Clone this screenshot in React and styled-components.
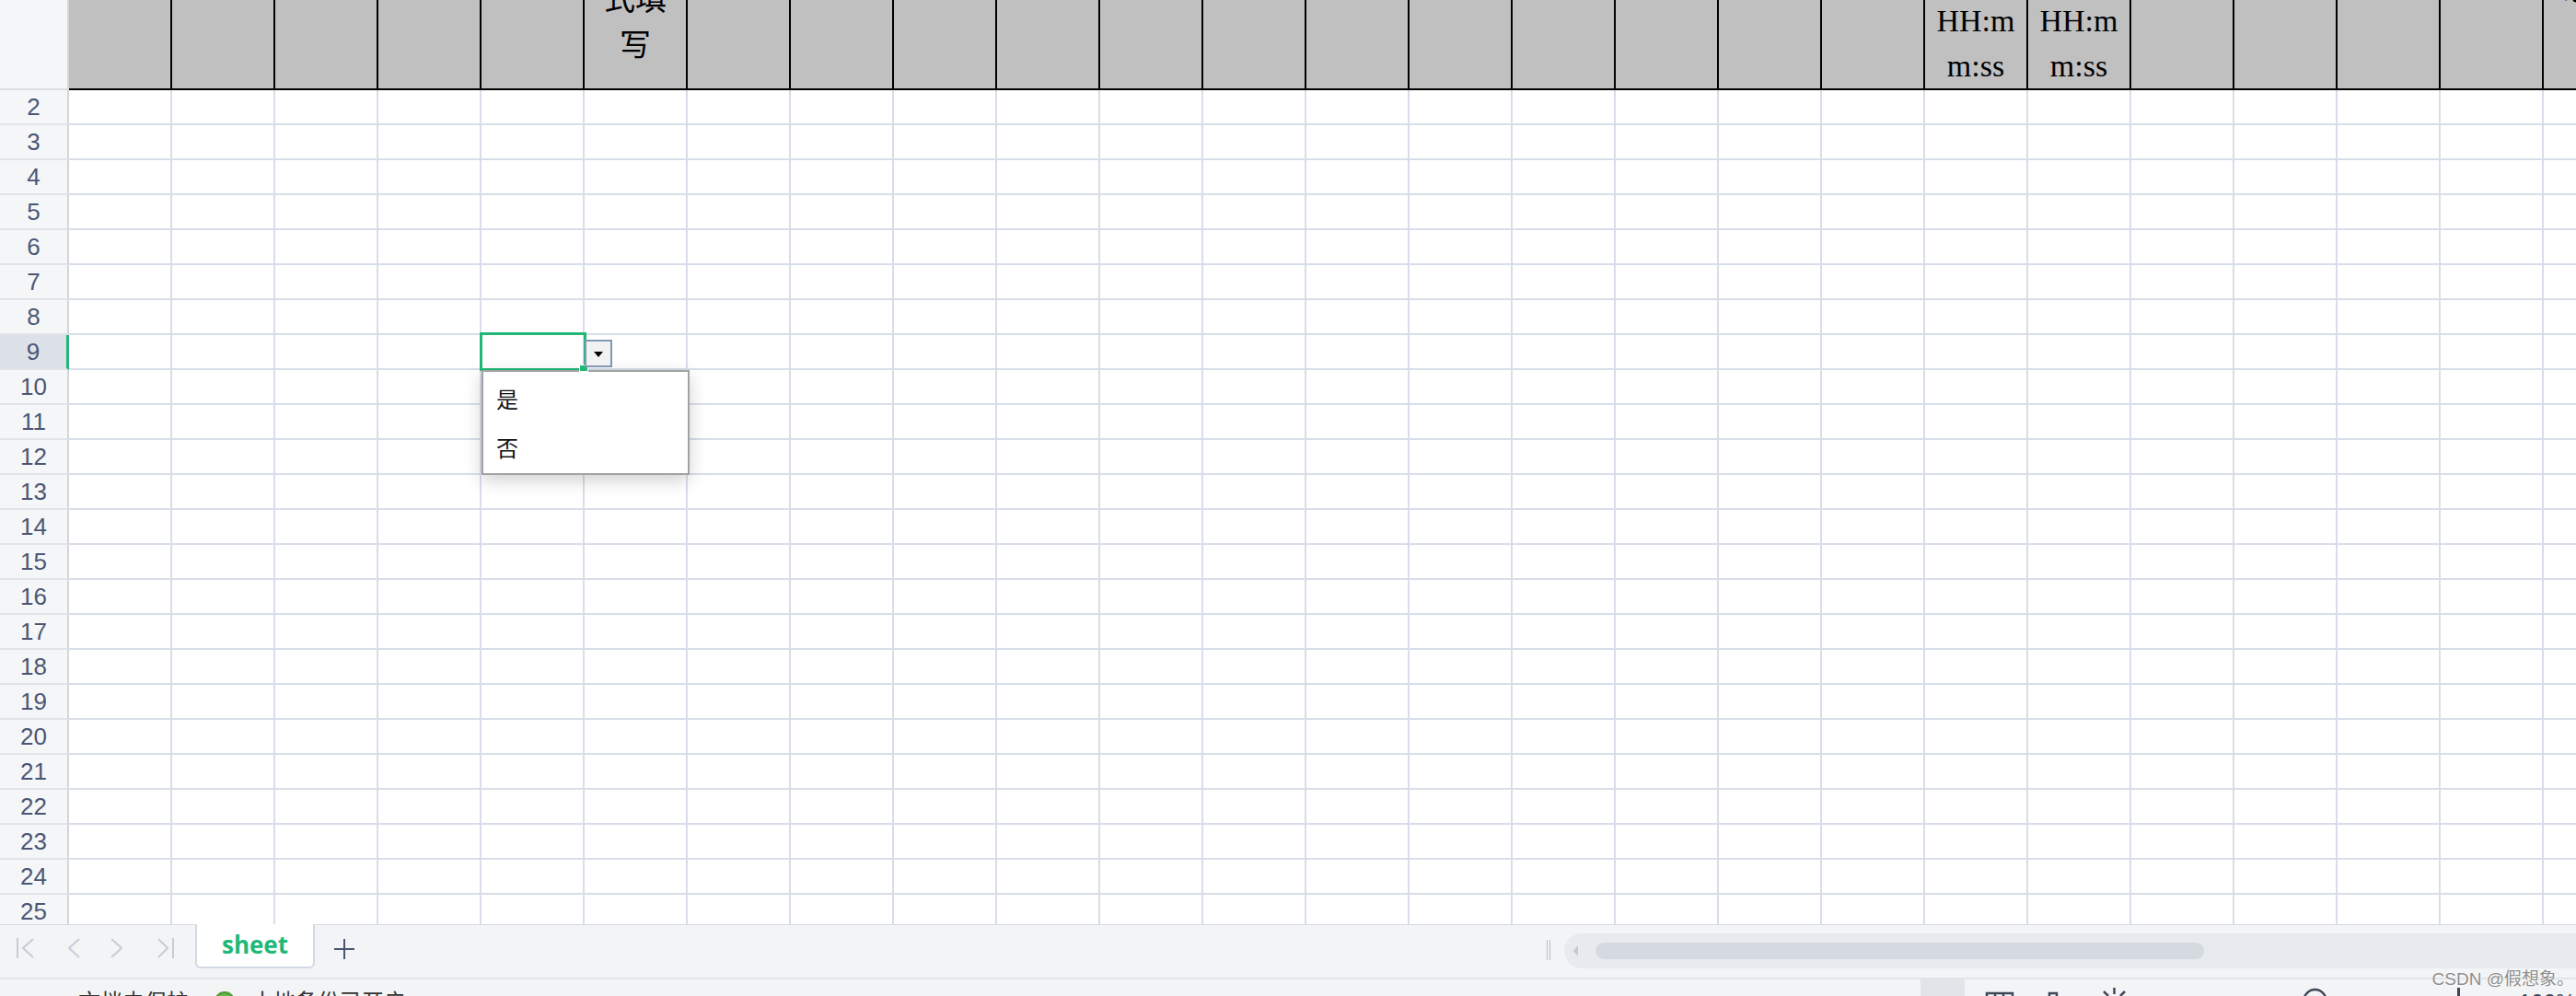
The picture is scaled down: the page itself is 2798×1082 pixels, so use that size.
import React from 'react';
import styled, { createGlobalStyle } from 'styled-components';

const GREEN = '#20b877';
const GRID = '#d8dee9';
const COLS = 25;

const Global = createGlobalStyle`
  *, *::before, *::after { box-sizing: border-box; }
  html, body { margin: 0; padding: 0; background: #fff; }
  body { font-family: "Liberation Sans", "Noto Sans CJK SC", sans-serif; }
  #root { width: 2798px; height: 1082px; }
`;

const Page = styled.div`
  position: relative;
  width: 2798px;
  height: 1082px;
  overflow: hidden;
  display: flex;
  flex-direction: column;
  background: #fff;
`;

const Sheet = styled.div`
  position: relative;
  flex: 0 0 1004px;
  height: 1004px;
  overflow: hidden;
`;

const Grid = styled.div`
  display: grid;
  grid-template-columns: 75px repeat(${COLS}, 112px);
  grid-template-rows: 98px;
  grid-auto-rows: 38px;
`;

const Corner = styled.div`
  background: #f5f6f8;
  border-right: 2px solid #d3d5da;
  border-bottom: 2px solid #dcdee2;
`;

const HeaderCell = styled.div`
  background: #c0c0c0;
  border-right: 2px solid #000;
  border-bottom: 2px solid #000;
  display: flex;
  flex-direction: column;
  justify-content: flex-end;
  align-items: center;
  overflow: hidden;
  padding-bottom: ${(p) => p.$pb || 0}px;
  font-family: "Liberation Serif", "Noto Sans CJK SC", serif;
  font-size: 34px;
  color: #000;
`;

const HeaderLine = styled.div`
  flex-shrink: 0;
  line-height: ${(p) => p.$lh || 49}px;
  white-space: nowrap;
`;

const RowHead = styled.div`
  background: ${(p) => (p.$active ? '#dde1e8' : '#f5f6f8')};
  border-right: ${(p) => (p.$active ? `3px solid ${GREEN}` : '2px solid #d3d5da')};
  border-bottom: 2px solid #e1e3e7;
  display: flex;
  align-items: center;
  justify-content: center;
  font-family: "Liberation Sans", sans-serif;
  font-size: 26px;
  color: #4b5675;
`;

const Cell = styled.div`
  background: #fff;
  border-right: 2px solid ${GRID};
  border-bottom: 2px solid ${GRID};
`;

const Selection = styled.div`
  position: absolute;
  left: 521px;
  top: 361px;
  width: 116px;
  height: 42px;
  border: 3px solid ${GREEN};
  pointer-events: none;
`;

const FillHandle = styled.div`
  position: absolute;
  left: 629px;
  top: 396px;
  width: 10px;
  height: 8px;
  background: ${GREEN};
  border: 1px solid #fff;
`;

const DropButton = styled.div`
  position: absolute;
  left: 635px;
  top: 369px;
  width: 30px;
  height: 30px;
  border: 2px solid #7f98b3;
  background: #f2f2f2;
  display: flex;
  align-items: center;
  justify-content: center;
`;

const Caret = styled.div`
  width: 0;
  height: 0;
  border-left: 5px solid transparent;
  border-right: 5px solid transparent;
  border-top: 6px solid #000;
  margin-top: 2px;
`;

const List = styled.div`
  position: absolute;
  left: 523px;
  top: 402px;
  width: 226px;
  height: 114px;
  background: #fff;
  border: 2px solid #a2a2a2;
  box-shadow: 0 6px 18px rgba(0, 0, 0, 0.18);
  padding: 2px 0;
  display: flex;
  flex-direction: column;
`;

const Option = styled.div`
  height: 53px;
  display: flex;
  align-items: center;
  padding-left: 14px;
  font-family: "Noto Sans CJK SC", sans-serif;
  font-size: 24px;
  color: #111;
`;

const TabBar = styled.div`
  flex: 0 0 58px;
  height: 58px;
  background: #f3f4f6;
  box-shadow: inset 0 1px 0 #d6dae2;
  display: flex;
  align-items: flex-start;
  overflow: hidden;
  padding-left: 18px;
`;

const NavIcon = styled.svg`
  flex-shrink: 0;
  margin-left: ${(p) => p.$ml || 0}px;
  margin-top: 15px;
  stroke: #c7ccd5;
  stroke-width: 2;
  fill: none;
`;

const Tab = styled.div`
  flex-shrink: 0;
  margin-left: 23px;
  width: 130px;
  height: 48px;
  background: #fff;
  border: 2px solid #d3d9e4;
  border-top: none;
  border-radius: 0 0 6px 6px;
  display: flex;
  align-items: center;
  justify-content: center;
  padding-bottom: 2px;
  font-family: "Open Sans", "Noto Sans", sans-serif;
  font-weight: 700;
  font-size: 26px;
  color: ${GREEN};
`;

const PlusIcon = styled.svg`
  flex-shrink: 0;
  margin-left: 21px;
  margin-top: 16px;
  stroke: #4a5573;
  stroke-width: 2;
`;

const Splitter = styled.div`
  flex-shrink: 0;
  margin-left: 1295px;
  margin-top: 17px;
  width: 4px;
  height: 22px;
  border-left: 1px solid #b9bfc9;
  border-right: 1px solid #b9bfc9;
`;

const Track = styled.div`
  flex-shrink: 0;
  margin-left: 15px;
  margin-top: 10px;
  width: 1120px;
  height: 38px;
  border-radius: 19px;
  background: #e7eaef;
  display: flex;
  align-items: center;
  padding-left: 10px;
`;

const TrackArrow = styled.div`
  flex-shrink: 0;
  width: 0;
  height: 0;
  border-top: 6px solid transparent;
  border-bottom: 6px solid transparent;
  border-right: 5px solid #c3c8d1;
`;

const Thumb = styled.div`
  flex-shrink: 0;
  margin-left: 19px;
  width: 661px;
  height: 18px;
  border-radius: 9px;
  background: #d5d9e0;
`;

const StatusBar = styled.div`
  flex: 0 0 60px;
  height: 60px;
  background: #f3f4f6;
  border-top: 2px solid #e2e4e8;
  display: flex;
  align-items: flex-start;
`;

const StatusLeft = styled.div`
  display: flex;
  align-items: flex-start;
  padding-left: 42px;
  padding-top: 8px;
  width: 2086px;
  flex-shrink: 0;
`;

const StatusText = styled.span`
  margin-left: ${(p) => p.$ml || 0}px;
  margin-top: 3px;
  font-family: "Noto Sans CJK SC", sans-serif;
  font-size: 24px;
  line-height: 24px;
  color: #333;
  white-space: nowrap;
`;

const Dot = styled.div`
  margin-left: 28px;
  margin-top: 5px;
  width: 22px;
  height: 22px;
  border-radius: 50%;
  background: #62b547;
  border: 2px solid #4f9a37;
  flex-shrink: 0;
`;

const StatusRight = styled.div`
  display: flex;
  align-items: flex-start;
  flex-shrink: 0;
`;

const ViewButton = styled.div`
  width: 48px;
  height: 44px;
  background: ${(p) => (p.$active ? '#e2e4e9' : 'transparent')};
  margin-left: ${(p) => p.$ml || 0}px;
  display: flex;
  justify-content: center;
  padding-top: 13px;
  flex-shrink: 0;
`;

const StatusIcon = styled.svg`
  flex-shrink: 0;
  margin-left: ${(p) => p.$ml || 0}px;
  margin-top: ${(p) => p.$mt || 13}px;
  stroke: #3e4759;
  stroke-width: 2.5;
  fill: none;
`;

const ZoomLine = styled.div`
  flex-shrink: 0;
  margin-left: 141px;
  margin-top: 9px;
  width: 3px;
  height: 30px;
  background: #3e4759;
`;

const ZoomText = styled.span`
  margin-left: 64px;
  margin-top: 13px;
  font-family: "Liberation Sans", sans-serif;
  font-size: 24px;
  line-height: 24px;
  color: #3e4759;
  white-space: nowrap;
`;

const Watermark = styled.div`
  position: absolute;
  right: 2px;
  bottom: 8px;
  font-family: "Liberation Sans", "Noto Sans CJK SC", sans-serif;
  font-size: 19px;
  line-height: 20px;
  color: #8d8d8d;
  text-shadow: 0 0 2px #fff, 0 0 2px #fff;
  white-space: nowrap;
`;

const headers = {
  5: { lines: ['式填', '写'], pb: 21, lh: 50 },
  18: { lines: ['HH:m', 'm:ss'], pb: 0, lh: 49 },
  19: { lines: ['HH:m', 'm:ss'], pb: 0, lh: 49 },
  24: { lines: ['必填'], pb: 82, lh: 50 },
};

export default function App() {
  const rows = [];
  for (let r = 2; r <= 25; r++) rows.push(r);
  const cols = Array.from({ length: COLS }, (_, i) => i);

  return (
    <Page>
      <Global />
      <Sheet>
        <Grid>
          <Corner />
          {cols.map((c) => {
            const h = headers[c];
            return (
              <HeaderCell key={`h${c}`} $pb={h ? h.pb : 0}>
                {h && h.lines.map((l, i) => (
                  <HeaderLine key={i} $lh={h.lh}>{l}</HeaderLine>
                ))}
              </HeaderCell>
            );
          })}
          {rows.map((r) => (
            <React.Fragment key={r}>
              <RowHead $active={r === 9}>{r}</RowHead>
              {cols.map((c) => (
                <Cell key={c} />
              ))}
            </React.Fragment>
          ))}
        </Grid>
        <Selection />
        <List>
          <Option>是</Option>
          <Option>否</Option>
        </List>
        <FillHandle />
        <DropButton>
          <Caret />
        </DropButton>
      </Sheet>

      <TabBar>
        <NavIcon width="19" height="22" viewBox="0 0 19 22">
          <line x1="1" y1="0" x2="1" y2="22" />
          <polyline points="18,1 7,11 18,21" />
        </NavIcon>
        <NavIcon $ml={36} width="14" height="22" viewBox="0 0 14 22">
          <polyline points="13,1 2,11 13,21" />
        </NavIcon>
        <NavIcon $ml={33} width="13" height="22" viewBox="0 0 13 22">
          <polyline points="1,1 12,11 1,21" />
        </NavIcon>
        <NavIcon $ml={38} width="18" height="22" viewBox="0 0 18 22">
          <polyline points="1,1 11,11 1,21" />
          <line x1="17" y1="0" x2="17" y2="22" />
        </NavIcon>
        <Tab>sheet</Tab>
        <PlusIcon width="22" height="22" viewBox="0 0 22 22">
          <line x1="11" y1="0" x2="11" y2="22" />
          <line x1="0" y1="11" x2="22" y2="11" />
        </PlusIcon>
        <Splitter />
        <Track>
          <TrackArrow />
          <Thumb />
        </Track>
      </TabBar>

      <StatusBar>
        <StatusLeft>
          <StatusIcon $mt={0} width="28" height="30" viewBox="0 0 28 30" style={{ stroke: '#666', strokeWidth: 2 }}>
            <path d="M2 9 L14 2 L26 9 V28 H2 Z" />
          </StatusIcon>
          <StatusText $ml={15}>文档未保护</StatusText>
          <Dot />
          <StatusText $ml={18}>本地备份已开启</StatusText>
        </StatusLeft>
        <StatusRight>
          <ViewButton $active>
            <StatusIcon $mt={0} width="32" height="28" viewBox="0 0 32 28">
              <rect x="2" y="2" width="28" height="24" />
              <line x1="2" y1="9" x2="30" y2="9" />
              <line x1="11" y1="2" x2="11" y2="26" />
              <line x1="20" y1="2" x2="20" y2="26" />
            </StatusIcon>
          </ViewButton>
          <StatusIcon $ml={22} width="32" height="28" viewBox="0 0 32 28">
            <rect x="2" y="2" width="28" height="24" />
            <line x1="2" y1="9" x2="30" y2="9" />
            <line x1="11" y1="2" x2="11" y2="26" />
            <line x1="20" y1="2" x2="20" y2="26" />
          </StatusIcon>
          <StatusIcon $ml={36} width="12" height="28" viewBox="0 0 12 28">
            <rect x="2" y="2" width="8" height="24" />
          </StatusIcon>
          <StatusIcon $ml={45} $mt={8} width="31" height="30" viewBox="0 0 31 30">
            <line x1="15.5" y1="1" x2="15.5" y2="8" />
            <line x1="4" y1="5" x2="9" y2="10" />
            <line x1="27" y1="5" x2="22" y2="10" />
            <circle cx="15.5" cy="20" r="7" />
          </StatusIcon>
          <StatusIcon $ml={189} $mt={8} width="27" height="30" viewBox="0 0 27 30">
            <circle cx="13.5" cy="15" r="12" />
          </StatusIcon>
          <ZoomLine />
          <ZoomText>100%</ZoomText>
        </StatusRight>
      </StatusBar>

      <Watermark>CSDN @假想象。</Watermark>
    </Page>
  );
}
